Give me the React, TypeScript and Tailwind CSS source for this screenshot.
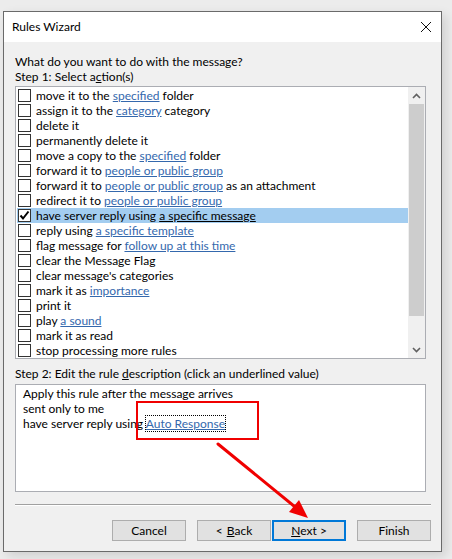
import type { ReactNode } from 'react'

const font = { fontFamily: 'Lato, "Noto Sans", Arial, sans-serif' }

const Link = ({ children, dark }: { children: ReactNode; dark?: boolean }) => (
  <span className={dark ? 'underline text-black' : 'underline text-[#3468ad]'}>{children}</span>
)

type Action = { id: string; label: ReactNode; checked?: boolean }

const ACTIONS: Action[] = [
  { id: 'move', label: <>move it to the <Link>specified</Link> folder</> },
  { id: 'assign', label: <>assign it to the <Link>category</Link> category</> },
  { id: 'delete', label: <>delete it</> },
  { id: 'perm', label: <>permanently delete it</> },
  { id: 'copy', label: <>move a copy to the <Link>specified</Link> folder</> },
  { id: 'fwd', label: <>forward it to <Link>people or public group</Link></> },
  { id: 'fwdAtt', label: <>forward it to <Link>people or public group</Link> as an attachment</> },
  { id: 'redirect', label: <>redirect it to <Link>people or public group</Link></> },
  { id: 'server', label: <>have server reply using <Link dark>a specific message</Link></>, checked: true },
  { id: 'reply', label: <>reply using <Link>a specific template</Link></> },
  { id: 'flag', label: <>flag message for <Link>follow up at this time</Link></> },
  { id: 'clearFlag', label: <>clear the Message Flag</> },
  { id: 'clearCat', label: <>clear message's categories</> },
  { id: 'mark', label: <>mark it as <Link>importance</Link></> },
  { id: 'print', label: <>print it</> },
  { id: 'sound', label: <>play <Link>a sound</Link></> },
  { id: 'read', label: <>mark it as read</> },
  { id: 'stop', label: <>stop processing more rules</> },
]

function Checkbox({ checked }: { checked?: boolean }) {
  return (
    <div className="w-[13px] h-[13px] border border-[#333] bg-white shrink-0 flex items-center justify-center">
      {checked && (
        <svg width="11" height="11" viewBox="0 0 11 11">
          <path d="M1.5 5.5 L4 8.5 L9.5 1.5" fill="none" stroke="#000" strokeWidth="2" />
        </svg>
      )}
    </div>
  )
}

function Chevron({ up }: { up?: boolean }) {
  return (
    <svg width="9" height="6" viewBox="0 0 9 6">
      <path d={up ? 'M1 5 L4.5 1.5 L8 5' : 'M1 1 L4.5 4.5 L8 1'} fill="none" stroke="#606060" strokeWidth="1.6" />
    </svg>
  )
}

function Button({ children, focused }: { children: ReactNode; focused?: boolean }) {
  return (
    <button
      className={
        'w-[74px] h-[21px] bg-[#e1e1e1] text-[12px] text-black flex items-center justify-center ' +
        (focused ? 'border-2 border-[#0078d7]' : 'border border-[#adadad]')
      }
    >
      {children}
    </button>
  )
}

export default function App() {
  return (
    <div className="relative w-[452px] h-[559px] bg-[#ececec] pt-[11px] pl-[3px] overflow-hidden" style={font}>
      <div className="w-[439px] h-[541px] border border-[#6a6a6a] bg-[#f0f0f0] flex flex-col shadow-[4px_4px_10px_rgba(0,0,0,0.12)]">
        {/* title bar */}
        <div className="h-[30px] bg-white flex items-center justify-between pl-[8px] pr-[9px] shrink-0">
          <span className="text-[12px] text-black">Rules Wizard</span>
          <svg width="12" height="12" viewBox="0 0 12 12">
            <path d="M1 1 L11 11 M11 1 L1 11" stroke="#111" strokeWidth="1" />
          </svg>
        </div>

        <div className="pl-[11px] pt-[12px] text-[12px] leading-[15px] text-black">
          <div>What do you want to do with the message?</div>
          <div>
            Step 1: Select a<span className="underline">c</span>tion(s)
          </div>

          {/* actions list */}
          <div className="mt-[2px] w-[411px] h-[273px] border border-[#abadb3] bg-white flex">
            <div className="flex-1 pt-[1px] pl-[1px]">
              {ACTIONS.map(a => (
                <div
                  key={a.id}
                  className={
                    'h-[15px] flex items-center gap-[5px] pl-[1px] whitespace-nowrap ' +
                    (a.checked ? 'bg-[#a3cdf0]' : '')
                  }
                >
                  <Checkbox checked={a.checked} />
                  <span>{a.label}</span>
                </div>
              ))}
            </div>
            <div className="w-[17px] bg-[#f0f0f0] flex flex-col items-center">
              <div className="h-[17px] flex items-center justify-center">
                <Chevron up />
              </div>
              <div className="w-[15px] h-[212px] bg-[#cdcdcd]" />
              <div className="flex-1" />
              <div className="h-[17px] flex items-center justify-center">
                <Chevron />
              </div>
            </div>
          </div>

          <div className="mt-[7px]">
            Step 2: Edit the rule <span className="underline">d</span>escription (click an underlined value)
          </div>

          {/* rule description */}
          <div className="mt-[3px] w-[411px] h-[108px] border border-[#abadb3] bg-white pl-[7px] pt-[1px]">
            <div>Apply this rule after the message arrives</div>
            <div>sent only to me</div>
            <div>
              have server reply using{' '}
              <span className="outline outline-1 outline-dotted outline-black underline text-[#3468ad]">
                Auto Response
              </span>
            </div>
          </div>

          <div className="mt-[12px] w-[416px] h-[2px] border-t border-[#a0a0a0] border-b border-b-white" />

          <div className="mt-[14px] w-[416px] flex justify-end">
            <Button>Cancel</Button>
            <div className="w-[11px]" />
            <Button>
              &lt; <span className="underline ml-1">B</span>ack
            </Button>
            <div className="w-[1px]" />
            <Button focused>
              <span className="underline">N</span>ext &gt;
            </Button>
            <div className="w-[11px]" />
            <Button>Finish</Button>
          </div>
        </div>
      </div>

      {/* callout */}
      <div className="absolute left-[136px] top-[401px] w-[123px] h-[39px] border-2 border-[#f00000]" />
      <svg className="absolute left-0 top-0 pointer-events-none" width="452" height="559" viewBox="0 0 452 559">
        <path d="M218 444 L300 511" stroke="#f00000" strokeWidth="3" strokeLinecap="round" />
        <path d="M308 518 L289 512 L299 500 Z" fill="#f00000" />
      </svg>
    </div>
  )
}
